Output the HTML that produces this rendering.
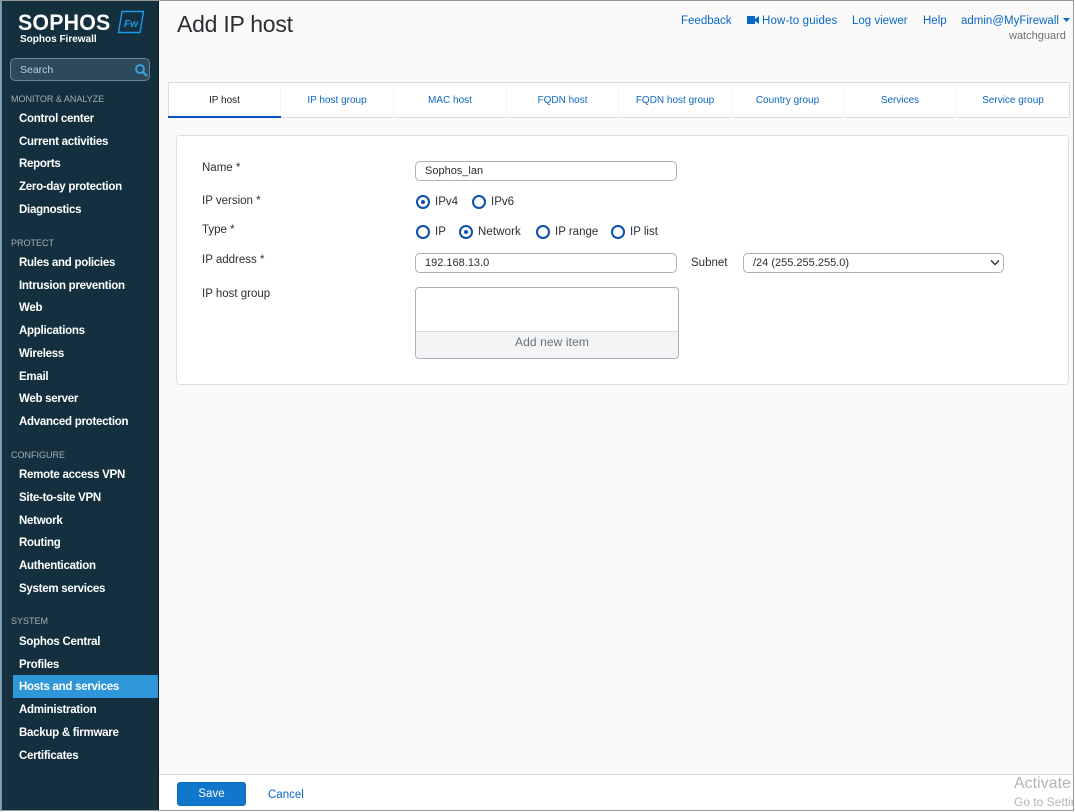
<!DOCTYPE html>
<html><head><meta charset="utf-8"><style>
html,body{margin:0;padding:0;width:1075px;height:812px;overflow:hidden;background:#fafafb;font-family:"Liberation Sans",sans-serif}
.a{position:absolute;white-space:nowrap}
.n{position:absolute;left:19px;color:#fff;font-weight:bold;font-size:11.5px;line-height:16px;margin-top:1px;white-space:nowrap;letter-spacing:-.27px}
.h{position:absolute;left:11px;color:#a3aeb4;font-size:9px;line-height:12px;white-space:nowrap}
.l{position:absolute;color:#0a68c4;font-size:11.5px;line-height:14px;margin-top:1px;white-space:nowrap}
.t{position:absolute;top:84px;height:34px;line-height:34px;text-align:center;color:#0a68c4;font-size:10px;border-right:1px solid #f6f6f6;box-sizing:border-box}
.f{position:absolute;color:#2b2f33;font-size:11.5px;line-height:14px;white-space:nowrap}
.i{position:absolute;box-sizing:border-box;height:20px;background:#fff;border:1px solid #adb1bb;border-radius:5px;font-size:11px;line-height:18px;color:#2b2f33;white-space:nowrap}
.r{position:absolute;box-sizing:border-box;width:14px;height:14px;border:2px solid #0a50b0;border-radius:50%;background:#fff}
.r.c:after{content:"";position:absolute;left:3px;top:3px;width:4px;height:4px;border-radius:50%;background:#0a50b0}
</style></head><body>
<div class="a" style="left:1074px;top:0;width:1px;height:812px;background:#fff;z-index:10"></div>
<div class="a" style="left:0;top:811px;width:1075px;height:1px;background:#fff;z-index:10"></div>
<div class="a" style="left:0;top:0;width:1074px;height:811px;box-sizing:border-box;border:1px solid #9a9a9a;z-index:9"></div>
<div class="a" style="left:1px;top:0;width:1px;height:811px;background:#5a9cc8;z-index:9"></div>
<div class="a" style="left:0;top:0;width:158px;height:812px;background:#14303f"></div>
<div class="a" style="left:158px;top:0;width:1px;height:812px;background:#0b1a22"></div>

<div class="a" style="left:18px;top:10px;color:#fff;font-weight:bold;font-size:22px;line-height:25px;letter-spacing:.2px;transform-origin:left;transform:scaleX(.97)">SOPHOS</div>
<svg class="a" style="left:117px;top:10px" width="28" height="25" viewBox="0 0 28 25"><path d="M5 1.500H26.500L23 22.500H1.500Z" fill="none" stroke="#1c9ce4" stroke-width="1.400"/><text x="7" y="17" font-family="Liberation Sans" font-style="italic" font-weight="bold" font-size="10" fill="#1c9ce4">Fw</text></svg>
<div class="a" style="left:20px;top:33px;color:#fff;font-weight:bold;font-size:10px;line-height:13px">Sophos Firewall</div>
<div class="a" style="left:10px;top:58px;width:140px;height:23px;box-sizing:border-box;background:#2d4a5b;border:1px solid #6d8494;border-radius:5px"></div>
<div class="a" style="left:20px;top:64px;color:#c3ced5;font-size:10.500px;line-height:13px">Search</div>
<svg class="a" style="left:134px;top:63px" width="14" height="14" viewBox="0 0 14 14"><circle cx="6" cy="6" r="4" fill="none" stroke="#39a5e3" stroke-width="1.800"/><path d="M9 9L13 13" stroke="#39a5e3" stroke-width="2"/></svg>

<div class="h" style="top:93px">MONITOR &amp; ANALYZE</div>
<div class="n" style="top:110px">Control center</div>
<div class="n" style="top:133px">Current activities</div>
<div class="n" style="top:155px">Reports</div>
<div class="n" style="top:178px">Zero-day protection</div>
<div class="n" style="top:201px">Diagnostics</div>
<div class="h" style="top:237px">PROTECT</div>
<div class="n" style="top:254px">Rules and policies</div>
<div class="n" style="top:277px">Intrusion prevention</div>
<div class="n" style="top:299px">Web</div>
<div class="n" style="top:322px">Applications</div>
<div class="n" style="top:345px">Wireless</div>
<div class="n" style="top:368px">Email</div>
<div class="n" style="top:390px">Web server</div>
<div class="n" style="top:413px">Advanced protection</div>
<div class="h" style="top:449px">CONFIGURE</div>
<div class="n" style="top:466px">Remote access VPN</div>
<div class="n" style="top:489px">Site-to-site VPN</div>
<div class="n" style="top:512px">Network</div>
<div class="n" style="top:534px">Routing</div>
<div class="n" style="top:557px">Authentication</div>
<div class="n" style="top:580px">System services</div>
<div class="h" style="top:615px">SYSTEM</div>
<div class="n" style="top:633px">Sophos Central</div>
<div class="n" style="top:656px">Profiles</div>
<div class="a" style="left:13px;top:675px;width:145px;height:23px;background:#2f96d8"></div>
<div class="n" style="top:678px">Hosts and services</div>
<div class="n" style="top:701px">Administration</div>
<div class="n" style="top:724px">Backup &amp; firmware</div>
<div class="n" style="top:747px">Certificates</div>

<div class="a" style="left:177px;top:10px;color:#2b2f33;font-size:23px;line-height:29px;letter-spacing:-.25px">Add IP host</div>

<div class="l" style="left:681px;top:13px">Feedback</div>
<svg class="a" style="left:747px;top:15px" width="12" height="10" viewBox="0 0 12 10"><path d="M0 1H8V9H0ZM8 4L12 1V9L8 6Z" fill="#0a68c4"/></svg>
<div class="l" style="left:762px;top:13px;letter-spacing:.15px">How-to guides</div>
<div class="l" style="left:852px;top:13px">Log viewer</div>
<div class="l" style="left:923px;top:13px">Help</div>
<div class="l" style="left:961px;top:13px">admin@MyFirewall</div>
<svg class="a" style="left:1063px;top:18px" width="7" height="4" viewBox="0 0 7 4"><path d="M0 0H7L3.500 4Z" fill="#0a68c4"/></svg>
<div class="a" style="left:1009px;top:30px;color:#6b7075;font-size:11px;line-height:13px">watchguard</div>

<div class="a" style="left:168px;top:82px;width:902px;height:36px;box-sizing:border-box;background:#fff;border:1px solid #dcdcdc"></div>
<div class="t" style="left:169px;width:112px;color:#222">IP host</div>
<div class="a" style="left:168px;top:116px;width:113px;height:1.500px;background:#0a4fc0"></div>
<div class="t" style="left:281px;width:113px">IP host group</div>
<div class="t" style="left:394px;width:113px">MAC host</div>
<div class="t" style="left:507px;width:112px">FQDN host</div>
<div class="t" style="left:619px;width:113px">FQDN host group</div>
<div class="t" style="left:732px;width:112px">Country group</div>
<div class="t" style="left:844px;width:113px">Services</div>
<div class="t" style="left:957px;width:112px;border:0">Service group</div>

<div class="a" style="left:176px;top:135px;width:893px;height:250px;box-sizing:border-box;background:#fff;border:1px solid #dfe0e2;border-radius:4px"></div>
<div class="f" style="left:202px;top:161px">Name *</div>
<div class="f" style="left:202px;top:194px">IP version *</div>
<div class="f" style="left:202px;top:223px">Type *</div>
<div class="f" style="left:202px;top:253px">IP address *</div>
<div class="f" style="left:202px;top:287px">IP host group</div>
<div class="i" style="left:415px;top:161px;width:262px;padding-left:9px">Sophos_lan</div>
<div class="r c" style="left:416px;top:195px"></div><div class="f" style="left:435px;top:195px">IPv4</div>
<div class="r" style="left:472px;top:195px"></div><div class="f" style="left:491px;top:195px">IPv6</div>
<div class="r" style="left:416px;top:225px"></div><div class="f" style="left:435px;top:225px">IP</div>
<div class="r c" style="left:459px;top:225px"></div><div class="f" style="left:478px;top:225px;letter-spacing:.1px">Network</div>
<div class="r" style="left:536px;top:225px"></div><div class="f" style="left:555px;top:225px">IP range</div>
<div class="r" style="left:611px;top:225px"></div><div class="f" style="left:630px;top:225px">IP list</div>
<div class="i" style="left:415px;top:253px;width:262px;padding-left:9px">192.168.13.0</div>
<div class="f" style="left:691px;top:256px">Subnet</div>
<div class="i" style="left:743px;top:253px;width:261px;padding-left:9px">/24 (255.255.255.0)</div>
<svg class="a" style="left:990px;top:259px" width="10" height="7" viewBox="0 0 10 7"><path d="M1 1.500L5 5.500L9 1.500" fill="none" stroke="#2b2f33" stroke-width="1.400"/></svg>
<div class="a" style="left:415px;top:287px;width:264px;height:72px;box-sizing:border-box;background:#fff;border:1px solid #adb1bb;border-radius:4px;overflow:hidden"><div style="position:absolute;left:0;right:0;top:43px;height:28px;background:#f3f4f6;border-top:1px solid #d5d7db;text-align:center;color:#6b7075;font-size:12px;line-height:21px;padding-left:10px;box-sizing:border-box;letter-spacing:.1px">Add new item</div></div>

<div class="a" style="left:159px;top:774px;width:914px;height:36px;background:#fff;border-top:1px solid #d8d8d8;box-sizing:border-box"></div>
<div class="a" style="left:177px;top:782px;width:69px;height:24px;box-sizing:border-box;background:#1177cc;border:1px solid #0f6ab8;border-radius:3px;color:#fff;text-align:center;font-size:11.500px;line-height:23px">Save</div>
<div class="l" style="left:268px;top:787px;font-size:11.500px">Cancel</div>
<div class="a" style="left:1014px;top:775px;color:#b5b5b5;font-size:16px;line-height:18px;width:59px;overflow:hidden">Activate</div>
<div class="a" style="left:1014px;top:795px;color:#b5b5b5;font-size:12px;line-height:14px;width:59px;overflow:hidden">Go to Settings</div>
</body></html>
